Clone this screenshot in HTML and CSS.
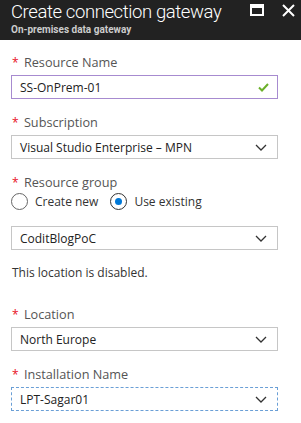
FILE: index.html
```html
<!DOCTYPE html>
<html lang="en">
<head>
  <meta charset="UTF-8" />
  <meta name="viewport" content="width=device-width, initial-scale=1.0" />
  <title>Create connection gateway</title>
  <link rel="stylesheet" href="styles.css">
</head>
<body>
  <div class="blade-header">
    <div class="titles">
      <h1>Create connection gateway</h1>
      <p>On-premises data gateway</p>
    </div>
    <div class="blade-actions">
      <svg class="icon-max" width="14" height="12" viewBox="0 0 14 12">
        <rect x="1" y="1" width="12" height="10" fill="none" stroke="#fff" stroke-width="2"/>
        <rect x="1" y="1" width="12" height="3" fill="#fff"/>
      </svg>
      <svg class="icon-close" width="13" height="13" viewBox="0 0 13 13">
        <path d="M1 1 L12 12 M12 1 L1 12" stroke="#fff" stroke-width="2"/>
      </svg>
    </div>
  </div>

  <form class="blade-content">
    <div class="field">
      <label class="field-label"><span class="req">*</span> Resource Name</label>
      <div class="box box-valid">
        <span>SS-OnPrem-01</span>
        <svg class="check" width="11" height="9" viewBox="0 0 11 9">
          <path d="M1 4.5 L4 7.5 L10 1" fill="none" stroke="#6bb02a" stroke-width="2"/>
        </svg>
      </div>
    </div>

    <div class="field">
      <label class="field-label"><span class="req">*</span> Subscription</label>
      <div class="box">
        <span>Visual Studio Enterprise – MPN</span>
        <svg class="chevron" width="12" height="7" viewBox="0 0 12 7"><path d="M1 1 L6 6 L11 1" fill="none" stroke="#333" stroke-width="1.3"/></svg>
      </div>
    </div>

    <div class="field">
      <label class="field-label"><span class="req">*</span> Resource group</label>
      <div class="radios">
        <span class="radio"><span class="dot"></span>Create new</span>
        <span class="radio checked"><span class="dot"></span>Use existing</span>
      </div>
      <div class="box">
        <span>CoditBlogPoC</span>
        <svg class="chevron" width="12" height="7" viewBox="0 0 12 7"><path d="M1 1 L6 6 L11 1" fill="none" stroke="#333" stroke-width="1.3"/></svg>
      </div>
    </div>

    <p class="note">This location is disabled.</p>

    <div class="field">
      <label class="field-label"><span class="req">*</span> Location</label>
      <div class="box">
        <span>North Europe</span>
        <svg class="chevron" width="12" height="7" viewBox="0 0 12 7"><path d="M1 1 L6 6 L11 1" fill="none" stroke="#333" stroke-width="1.3"/></svg>
      </div>
    </div>

    <div class="field">
      <label class="field-label"><span class="req">*</span> Installation Name</label>
      <div class="box box-focus">
        <span>LPT-Sagar01</span>
        <svg class="chevron" width="12" height="7" viewBox="0 0 12 7"><path d="M1 1 L6 6 L11 1" fill="none" stroke="#333" stroke-width="1.3"/></svg>
      </div>
    </div>
  </form>
</body>
</html>
```

FILE: styles.css
```css
* {
  box-sizing: border-box;
}
body {
  margin: 0;
  font-family: "Open Sans", "Noto Sans", sans-serif;
  background: #fff;
  color: #333;
}
.blade-header {
  height: 40px;
  background: #222;
  display: flex;
  justify-content: space-between;
  padding: 1px 6px 0 11px;
  color: #fff;
  font-family: Roboto, "Open Sans", sans-serif;
}
.titles h1 {
  margin: 0;
  font-size: 18.5px;
  font-weight: 300;
  line-height: 23px;
  letter-spacing: -0.4px;
  white-space: nowrap;
}
.titles p {
  margin: 0;
  font-size: 10px;
  font-weight: 700;
  line-height: 12px;
  color: #ccc;
}
.blade-actions {
  display: flex;
  gap: 18px;
  padding-top: 3px;
  align-items: flex-start;
}
.blade-content {
  padding: 13px 23px 0 11px;
  font-size: 12.7px;
}
.field {
  margin-bottom: 14px;
}
.field-label {
  display: block;
  line-height: 18px;
  margin-bottom: 3px;
  color: #555;
}
.req {
  color: #e81123;
  padding-left: 1px;
  margin-right: 2px;
  font-size: 12px;
}
.box {
  height: 24px;
  border: 1px solid #c6c6c6;
  display: flex;
  align-items: center;
  justify-content: space-between;
  padding: 0 8px 0 8px;
  font-size: 12px;
  color: #222;
}
.box-valid {
  border-color: #a78bd0;
}
.box-focus {
  border: 1px dashed #6a9fd6;
}
.chevron {
  margin-right: 2px;
}
.radios {
  display: flex;
  gap: 12px;
  height: 17px;
  align-items: center;
  margin-top: -2px;
  margin-bottom: 16px;
}
.radio {
  display: flex;
  align-items: center;
  gap: 7px;
  font-size: 12px;
  color: #333;
}
.dot {
  width: 17px;
  height: 17px;
  border: 1px solid #666;
  border-radius: 50%;
  display: inline-block;
  position: relative;
}
.radio.checked .dot {
  border-color: #333;
}
.radio.checked .dot::after {
  content: "";
  position: absolute;
  left: 4px;
  top: 4px;
  width: 7px;
  height: 7px;
  border-radius: 50%;
  background: #0078d7;
}
.note {
  margin: 0 0 23px 1px;
  line-height: 18px;
  font-size: 12px;
  color: #333;
}
```
